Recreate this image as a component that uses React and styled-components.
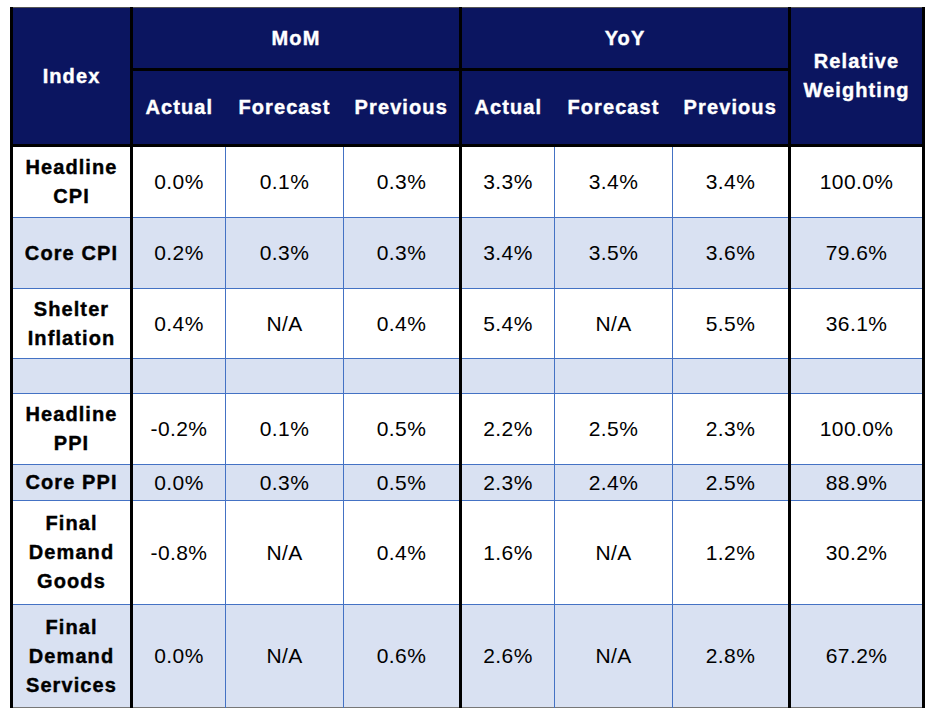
import React from "react";
import styled, { createGlobalStyle } from "styled-components";

const Global = createGlobalStyle`
  html, body { margin: 0; padding: 0; background: #ffffff; }
  body { font-family: "Liberation Sans", Arial, sans-serif; }
`;

const NAVY = "#0b1560";
const LIGHT = "#d9e1f2";
const GRID = "#4472c4";

const Page = styled.div`
  padding: 7px 0 0 10px;
`;

const Table = styled.table`
  border-collapse: collapse;
  table-layout: fixed;
  width: 912px;
  border-top: 1px solid #555;
  border-left: 3px solid #000;
  border-right: 3px solid #000;
  border-bottom: 1px solid #777;
`;

const HeadCell = styled.th`
  background: ${NAVY};
  color: #ffffff;
  font-family: "Liberation Sans", Arial, sans-serif;
  font-weight: 700;
  font-size: 20px;
  letter-spacing: 1.1px;
  -webkit-text-stroke: 0.4px #ffffff;
  line-height: 29px;
  text-align: center;
  vertical-align: middle;
  padding: 0;
  height: ${(p) => p.$h}px;
  border-left: ${(p) => (p.$group ? "3px solid #000" : "none")};
  border-bottom: 3px solid #000;
`;

const Row = styled.tr`
  background: ${(p) => (p.$shade ? LIGHT : "#ffffff")};
  height: ${(p) => p.$h}px;
`;

const LabelCell = styled.td`
  font-family: "Liberation Sans", Arial, sans-serif;
  font-weight: 700;
  font-size: 20px;
  letter-spacing: 1.1px;
  -webkit-text-stroke: 0.4px #000000;
  line-height: 29px;
  color: #000;
  text-align: center;
  vertical-align: middle;
  padding: 0;
  border-top: 1px solid ${GRID};
`;

const Cell = styled.td`
  font-family: "Liberation Sans", Arial, sans-serif;
  font-weight: 400;
  font-size: 21px;
  letter-spacing: 0.4px;
  color: #000;
  text-align: center;
  vertical-align: middle;
  padding: 0;
  border-top: 1px solid ${GRID};
  border-left: ${(p) => (p.$group ? "3px solid #000" : `1px solid ${GRID}`)};
`;

const widths = [120, 94, 118, 117, 94, 118, 117, 134];

const rows = [
  { label: ["Headline", "CPI"], h: 72, v: ["0.0%", "0.1%", "0.3%", "3.3%", "3.4%", "3.4%", "100.0%"] },
  { label: ["Core CPI"], h: 71, v: ["0.2%", "0.3%", "0.3%", "3.4%", "3.5%", "3.6%", "79.6%"] },
  { label: ["Shelter", "Inflation"], h: 70, v: ["0.4%", "N/A", "0.4%", "5.4%", "N/A", "5.5%", "36.1%"] },
  { label: [], h: 35, v: ["", "", "", "", "", "", ""] },
  { label: ["Headline", "PPI"], h: 71, v: ["-0.2%", "0.1%", "0.5%", "2.2%", "2.5%", "2.3%", "100.0%"] },
  { label: ["Core PPI"], h: 36, v: ["0.0%", "0.3%", "0.5%", "2.3%", "2.4%", "2.5%", "88.9%"] },
  { label: ["Final", "Demand", "Goods"], h: 104, v: ["-0.8%", "N/A", "0.4%", "1.6%", "N/A", "1.2%", "30.2%"] },
  { label: ["Final", "Demand", "Services"], h: 103, v: ["0.0%", "N/A", "0.6%", "2.6%", "N/A", "2.8%", "67.2%"] },
];

const groupStart = (i) => i === 0 || i === 3 || i === 6;

export default function App() {
  return (
    <Page>
      <Global />
      <Table>
        <colgroup>
          {widths.map((w, i) => (
            <col key={i} style={{ width: w }} />
          ))}
        </colgroup>
        <thead>
          <tr>
            <HeadCell rowSpan={2} $h={60}>Index</HeadCell>
            <HeadCell colSpan={3} $group $h={60}>MoM</HeadCell>
            <HeadCell colSpan={3} $group $h={60}>YoY</HeadCell>
            <HeadCell rowSpan={2} $group $h={60}>
              Relative
              <br />
              Weighting
            </HeadCell>
          </tr>
          <tr>
            <HeadCell $group $h={73}>Actual</HeadCell>
            <HeadCell $h={73}>Forecast</HeadCell>
            <HeadCell $h={73}>Previous</HeadCell>
            <HeadCell $group $h={73}>Actual</HeadCell>
            <HeadCell $h={73}>Forecast</HeadCell>
            <HeadCell $h={73}>Previous</HeadCell>
          </tr>
        </thead>
        <tbody>
          {rows.map((r, ri) => (
            <Row key={ri} $shade={ri % 2 === 1} $h={r.h}>
              <LabelCell>
                {r.label.map((l, li) => (
                  <React.Fragment key={li}>
                    {li > 0 && <br />}
                    {l}
                  </React.Fragment>
                ))}
              </LabelCell>
              {r.v.map((v, vi) => (
                <Cell key={vi} $group={groupStart(vi)}>
                  {v}
                </Cell>
              ))}
            </Row>
          ))}
        </tbody>
      </Table>
    </Page>
  );
}
